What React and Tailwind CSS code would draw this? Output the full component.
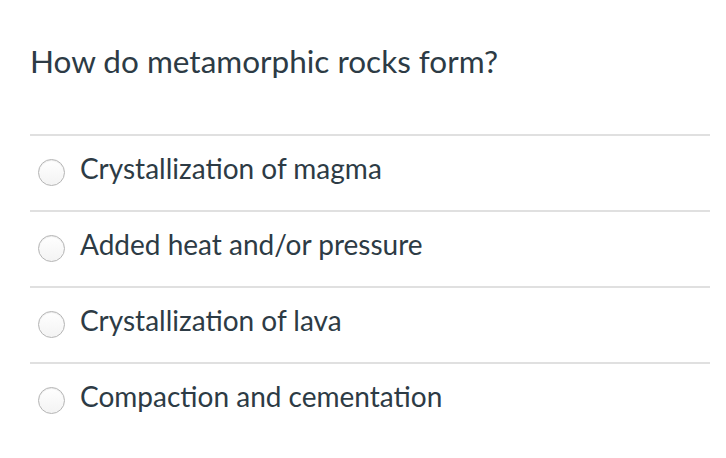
export default function App() {
  const options = [
    "Crystallization of magma",
    "Added heat and/or pressure",
    "Crystallization of lava",
    "Compaction and cementation",
  ];
  return (
    <div className="w-[726px] h-[458px] bg-white text-[#2d3b45]" style={{ fontFamily: "Lato, 'Noto Sans', sans-serif" }}>
      <div className="pl-[30px] pr-[16px]">
        <div className="pt-[41px] h-[134px] text-[31.5px] leading-[40px]">How do metamorphic rocks form?</div>
        {options.map((o) => (
          <div key={o} className="border-t-2 border-[#e0e0e0] h-[76px] flex items-start">
            <span className="mt-[23px] ml-[8px] w-[27px] h-[27px] shrink-0 rounded-full border border-[#b5b5b5] bg-gradient-to-b from-white to-[#f3f3f3] shadow-[inset_0_1px_1px_rgba(0,0,0,0.08)]" />
            <span className="mt-[17px] ml-[15px] text-[28px] leading-[30px]">{o}</span>
          </div>
        ))}
      </div>
    </div>
  );
}
